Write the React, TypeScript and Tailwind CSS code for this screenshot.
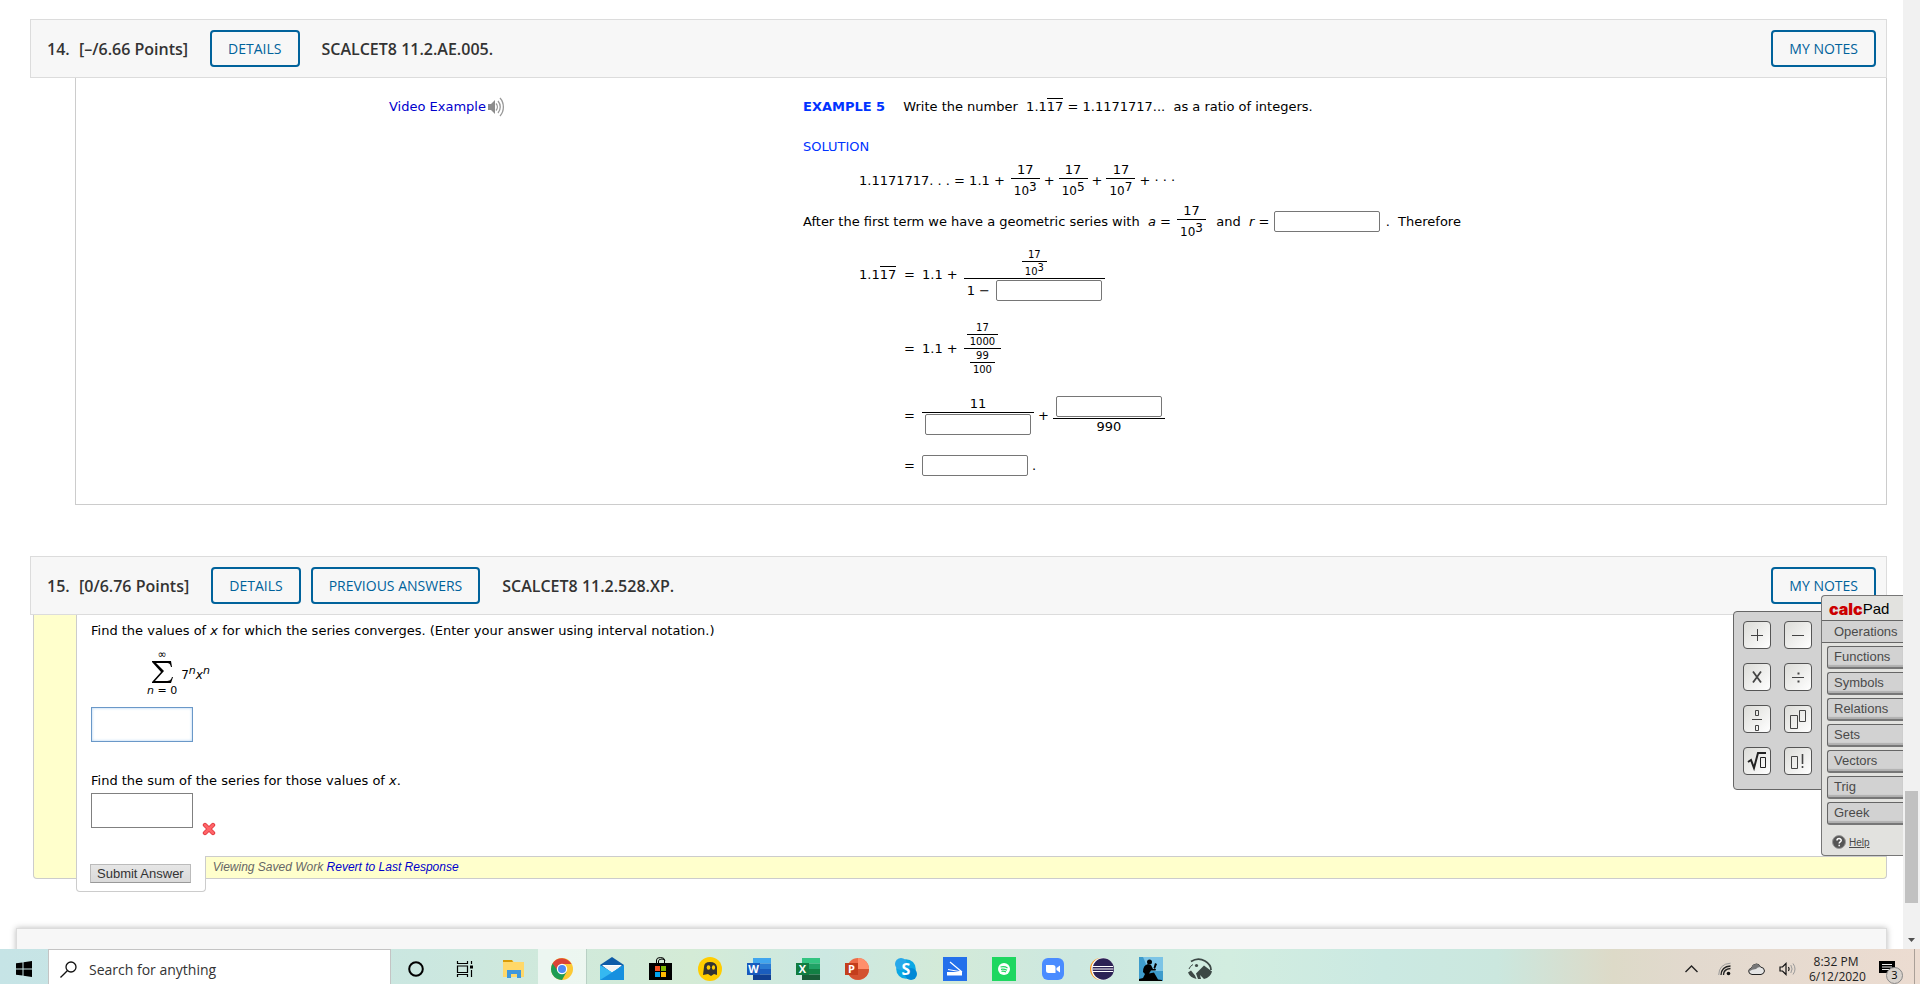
import type { ReactNode } from 'react';
import clsx from 'clsx';

const verdana = "font-['DejaVu_Sans',sans-serif]";
const openSans = "font-['Open_Sans','Noto_Sans',sans-serif]";
const arial = "font-['Liberation_Sans',Arial,sans-serif]";

const calcTabs = ['Functions', 'Symbols', 'Relations', 'Sets', 'Vectors', 'Trig', 'Greek'];

function HeaderButton({ children }: { children: ReactNode }) {
  return (
    <button
      type="button"
      className="h-[37px] rounded border-2 border-[#00629b] bg-[#f7f7f7] px-4 text-sm text-[#00629b]"
    >
      {children}
    </button>
  );
}

interface QuestionHeaderProps {
  number: string;
  points: string;
  code: string;
  actions: string[];
}

function QuestionHeader({ number, points, code, actions }: QuestionHeaderProps) {
  return (
    <header
      className={clsx(
        openSans,
        'flex h-[59px] items-center border border-[#dcdcdc] bg-[#f7f7f7] pr-2.5 pl-4 font-semibold text-[#333]'
      )}
    >
      <span className="w-8">{number}</span>
      <h2>{points}</h2>
      <div className="mx-[22px] flex gap-2.5 font-normal">
        {actions.map((action) => (
          <HeaderButton key={action}>{action}</HeaderButton>
        ))}
      </div>
      <span>{code}</span>
      <div className="ml-auto font-normal">
        <HeaderButton>MY NOTES</HeaderButton>
      </div>
    </header>
  );
}

function Frac({ top, bottom, small }: { top: ReactNode; bottom: ReactNode; small?: boolean }) {
  return (
    <span className={clsx('inline-flex flex-col', small && 'text-[10px]')}>
      <span className={clsx('flex justify-center px-[3px]', small ? 'leading-[13px]' : 'leading-4')}>{top}</span>
      <span
        className={clsx('flex justify-center border-t border-black px-[3px]', small ? 'leading-[13px]' : 'leading-4')}
      >
        {bottom}
      </span>
    </span>
  );
}

function Power({ exp, small }: { exp: string; small?: boolean }) {
  return (
    <span className={clsx('flex', small ? 'pt-[3px]' : 'pt-1 text-xs leading-4')}>
      10<span className="-mt-1">{exp}</span>
    </span>
  );
}

function Blank({ label }: { label: string }) {
  return (
    <input
      type="text"
      aria-label={label}
      className="h-[21px] w-[106px] rounded-[2px] border border-[#767676] bg-white px-1"
    />
  );
}

function Overlined() {
  return (
    <span>
      1.1<span className="border-t border-black">17</span>
    </span>
  );
}

function EquationRow({ left, children }: { left?: ReactNode; children: ReactNode }) {
  return (
    <div className="flex items-center">
      <span className="w-[45px]">{left}</span>
      <span className="w-[18px]">=</span>
      {children}
    </div>
  );
}

function QuestionFourteen() {
  return (
    <section>
      <QuestionHeader
        number="14."
        points="[–/6.66 Points]"
        code="SCALCET8 11.2.AE.005."
        actions={['DETAILS']}
      />
      <div
        className={clsx(
          verdana,
          'ml-[45px] grid grid-cols-[2fr_3fr] border border-t-0 border-[#ccc] px-[15px] pt-[21px] pb-7 text-[13px] leading-4'
        )}
      >
        <div className="flex items-start justify-center">
          <a href="#video" className="text-[#0000cc]">
            Video Example
          </a>
          <SpeakerIcon />
        </div>
        <div>
          <p className="whitespace-pre">
            <b className="mr-[18px] text-[#0033ff]">EXAMPLE 5</b>Write the number{'  '}
            <Overlined /> = 1.1171717...{'  '}as a ratio of integers.
          </p>
          <p className="mt-6 text-[#0033ff]">SOLUTION</p>
          <div className="mt-[7px] ml-14 flex items-center gap-1">
            <span className="mr-0.5">1.1171717. . . = 1.1 +</span>
            <Frac top="17" bottom={<Power exp="3" />} />
            <span>+</span>
            <Frac top="17" bottom={<Power exp="5" />} />
            <span>+</span>
            <Frac top="17" bottom={<Power exp="7" />} />
            <span>+ · · ·</span>
          </div>
          <div className="mt-1 flex items-center whitespace-pre">
            <span className="mr-0.5">
              After the first term we have a geometric series with{'  '}
              <i>a</i> ={' '}
            </span>
            <Frac top="17" bottom={<Power exp="3" />} />
            <span className="ml-0.5">
              {'  '}and{'  '}
              <i>r</i> ={' '}
            </span>
            <Blank label="r" />
            <span className="ml-0.5">
              {' '}
              .{'  '}Therefore
            </span>
          </div>
          <div className="mt-2 ml-14 flex flex-col gap-5">
            <EquationRow left={<Overlined />}>
              <span className="mr-1.5">1.1 +</span>
              <Frac
                top={<Frac small top="17" bottom={<Power small exp="3" />} />}
                bottom={
                  <span className="flex items-center gap-1.5 pt-px">
                    1 − <Blank label="Subtracted from one" />
                  </span>
                }
              />
            </EquationRow>
            <EquationRow>
              <span className="mr-1.5">1.1 +</span>
              <Frac
                top={<Frac small top="17" bottom="1000" />}
                bottom={<Frac small top="99" bottom="100" />}
              />
            </EquationRow>
            <EquationRow>
              <Frac
                top="11"
                bottom={
                  <span className="flex pt-px">
                    <Blank label="Denominator" />
                  </span>
                }
              />
              <span className="mx-1">+</span>
              <Frac
                top={
                  <span className="flex pb-px">
                    <Blank label="Numerator" />
                  </span>
                }
                bottom="990"
              />
            </EquationRow>
            <EquationRow>
              <Blank label="Ratio of integers" />
              <span className="ml-1">.</span>
            </EquationRow>
          </div>
        </div>
      </div>
    </section>
  );
}

function QuestionFifteen() {
  return (
    <section className="mt-[51px]">
      <QuestionHeader
        number="15."
        points="[0/6.76 Points]"
        code="SCALCET8 11.2.528.XP."
        actions={['DETAILS', 'PREVIOUS ANSWERS']}
      />
      <div className="ml-[3px] flex rounded-b border border-t-0 border-[#ccc] bg-[#ffffcc] pl-[42px]">
        <div className="flex-1">
          <div className={clsx(verdana, 'border-l border-[#ccc] bg-white pt-2 pb-7 pl-3.5 text-[13px] leading-4')}>
            <label htmlFor="interval" className="block">
              Find the values of <i>x</i> for which the series converges. (Enter your answer using interval
              notation.)
            </label>
            <div className="mt-[9px] ml-14 flex items-center gap-1">
              <div className="flex flex-col items-center text-[11px] leading-[14px]">
                <span className="h-3">∞</span>
                <svg width="22" height="24" viewBox="0 0 22 24" aria-hidden="true">
                  <path d="M1 1h19l1 6h-1c-1-4-2-4-6-4H5l8 8-9 10h11c4 0 5-1 6-4h1l-2 6H1v-1l9-10L1 2z" />
                </svg>
                <span>
                  <i>n</i> = 0
                </span>
              </div>
              <span className="pt-1 text-xs">
                7<sup className="text-[11px]"><i>n</i></sup>
                <i>x</i>
                <sup className="text-[11px]"><i>n</i></sup>
              </span>
            </div>
            <input
              id="interval"
              type="text"
              className="mt-[9px] block h-[35px] w-[102px] border border-[#6a98c8] bg-white px-1 shadow-[inset_0_0_3px_#a8cdf0]"
            />
            <label htmlFor="sum" className="mt-[31px] block">
              Find the sum of the series for those values of <i>x</i>.
            </label>
            <div className="mt-1 flex items-end gap-[9px]">
              <input id="sum" type="text" className="h-[35px] w-[102px] border border-[#808080] bg-white px-1" />
              <svg width="14" height="14" viewBox="0 0 14 14" className="-mb-2" aria-hidden="true">
                <path d="M3 3l8 8M11 3l-8 8" stroke="#e03a40" strokeWidth="4.4" strokeLinecap="round" />
                <path d="M3 3l8 8M11 3l-8 8" stroke="#ff6468" strokeWidth="2.6" strokeLinecap="round" />
              </svg>
            </div>
          </div>
          <div className={clsx(arial, 'flex items-start')}>
            <div className="-mb-[14px] rounded-b border border-t-0 border-[#ccc] bg-white pt-2 pr-3.5 pb-2 pl-[13px]">
              <button
                type="submit"
                className="block h-[19px] border border-[#bbb] border-b-[#999] bg-linear-to-b from-[#e6e6e6] to-[#dadada] px-1.5 text-[13px] leading-4 text-[#333]"
              >
                Submit Answer
              </button>
            </div>
            <p className="h-[22px] flex-1 border-t border-[#ccc] pl-[7px] text-xs leading-5 text-[#666] italic">
              Viewing Saved Work{' '}
              <a href="#revert" className="text-[#0000cc]">
                Revert to Last Response
              </a>
            </p>
          </div>
        </div>
      </div>
    </section>
  );
}

function SpeakerIcon() {
  return (
    <svg width="18" height="20" viewBox="0 0 18 20" fill="none" className="-mt-0.5 ml-px" aria-hidden="true">
      <path d="M1 7h3l4-4v14l-4-4H1z" fill="#8c8c8c" />
      <path d="M9 6.500c1.800 2 1.800 5 0 7M11 4c3 3.500 3 8.500 0 12M13 1c4.500 5 4.500 13 0 18" stroke="#999" strokeWidth="1.300" />
    </svg>
  );
}

function CalcKey({ label, children }: { label: string; children: ReactNode }) {
  return (
    <button
      type="button"
      aria-label={label}
      className="flex size-7 items-center justify-center rounded border border-[#555] bg-linear-to-br from-[#dcdcd8] to-white"
    >
      <svg width="26" height="26" viewBox="0 0 26 26" fill="none" stroke="#444">
        {children}
      </svg>
    </button>
  );
}

function CalcPad() {
  return (
    <aside className={clsx(arial, 'absolute top-[595px] right-0 flex items-start text-[13px] text-[#4a4a4a]')}>
      <div className="mt-4 grid grid-cols-2 gap-x-[13px] gap-y-3.5 rounded-l border border-[#666] bg-[#d2d2d2] pt-[9px] pr-[9px] pb-3.5 pl-[9px]">
        <CalcKey label="Plus">
          <path d="M7 13.500h12M13.500 7v12" />
        </CalcKey>
        <CalcKey label="Minus">
          <path d="M7 13.500h12" />
        </CalcKey>
        <CalcKey label="Times">
          <path d="M9 7.500l8 11M17 7.500l-8 11" strokeWidth="1.800" />
        </CalcKey>
        <CalcKey label="Divide">
          <path d="M7 13.500h12" />
          <path d="M12.500 9.500h2M12.500 17.500h2" strokeWidth="2" />
        </CalcKey>
        <CalcKey label="Fraction">
          <path d="M8 13.500h10M11.500 4.500h3v5h-3zM11.500 19.500h3v5h-3z" />
        </CalcKey>
        <CalcKey label="Exponent">
          <path d="M5.500 9.500h7v13h-7zM14.500 4.500h6v11h-6z" />
        </CalcKey>
        <CalcKey label="Square root">
          <path d="M4 14l3-2 3 8 4-15h8" strokeWidth="2" stroke="#222" />
          <path d="M16.500 9.500h5v10h-5z" stroke="#222" />
        </CalcKey>
        <CalcKey label="Factorial">
          <path d="M6.500 8.500h6v12h-6z" />
          <path d="M17.500 6v10M17.500 18v2" strokeWidth="1.600" />
        </CalcKey>
      </div>
      <div className="-ml-px w-[82px] overflow-hidden rounded-l border border-r-0 border-[#777] bg-[#e2e2df]">
        <h3 className="flex h-6 items-center pt-0.5 pl-[7px] text-[15px] text-black">
          <span className="font-['Inter','DejaVu_Sans',sans-serif] text-base font-black text-[#cc0000]">calc</span>Pad
        </h3>
        <button
          type="button"
          className="-ml-px block h-[23px] w-[82px] border-y border-[#666] bg-[#d2d2d2] pl-[13px] text-left leading-5"
        >
          Operations
        </button>
        <div className="mt-[3px] ml-[5px] flex flex-col gap-[3px]">
          {calcTabs.map((tab) => (
            <button
              key={tab}
              type="button"
              className="h-[23px] rounded-l-[3px] border border-r-0 border-b-2 border-[#666] border-b-[#777] bg-[#d2d2d2] pl-1.5 text-left leading-5 shadow-[inset_0_-2px_1px_#b0b0b0]"
            >
              {tab}
            </button>
          ))}
        </div>
        <div className="mt-1 flex h-[26px] items-center gap-[3px] pl-2.5 text-[10px]">
          <svg width="14" height="14" viewBox="0 0 14 14" aria-hidden="true">
            <circle cx="7" cy="7" r="6.500" fill="#555" stroke="#999" />
            <path d="M5 5.500C5 3 9.200 3 9.200 5.400 9.200 7 7.200 6.800 7.200 8.500M7.200 9.800v1.500" fill="none" stroke="#fff" strokeWidth="1.500" />
          </svg>
          <a href="#help" className="underline">
            Help
          </a>
        </div>
      </div>
    </aside>
  );
}

function ScrollBar() {
  return (
    <div className="flex w-[17px] flex-col items-center bg-[#f1f1f1]">
      <div className="flex-1" />
      <div className="h-[112px] w-[13px] bg-[#c1c1c1]" />
      <div className="flex h-[46px] items-end pb-[7px]">
        <svg width="7" height="4" viewBox="0 0 7 4" aria-hidden="true">
          <path d="M0 0h7L3.500 4z" fill="#505050" />
        </svg>
      </div>
    </div>
  );
}

interface OfficeProps {
  letter: string;
  tile: string;
  bands: string[];
}

function OfficeIcon({ letter, tile, bands }: OfficeProps) {
  return (
    <>
      {bands.map((color, i) => (
        <rect key={color} x="6" y={1 + i * 5.5} width="18" height="5.500" fill={color} />
      ))}
      <rect x="0" y="6" width="13" height="12" fill={tile} />
      <text x="6.500" y="16" textAnchor="middle" fontSize="11" fontWeight="700" fill="#fff" fontFamily="Open Sans">
        {letter}
      </text>
    </>
  );
}

const apps: { name: string; active?: boolean; icon: ReactNode }[] = [
  { name: 'Cortana', icon: <circle cx="12" cy="12" r="6.800" fill="none" stroke="#000" strokeWidth="2" /> },
  {
    name: 'Task View',
    icon: (
      <g fill="none" stroke="#000" strokeWidth="1.200">
        <path d="M4.500 4v2.500h10V4M4.500 20v-2.500h10V20M4.500 9h10v6.500h-10zM18.500 4v3M18.500 13v7" />
        <path d="M17 8.500h3v3h-3z" fill="#000" stroke="none" />
      </g>
    ),
  },
  {
    name: 'File Explorer',
    icon: (
      <>
        <path d="M1 3h9l2 2h10v15H1z" fill="#ffd869" />
        <path d="M1 3h9l1 2H1z" fill="#d99b06" />
        <path d="M5 13h14v8h-4v-4H9v4H5z" fill="#3f97dc" />
      </>
    ),
  },
  {
    name: 'Chrome',
    active: true,
    icon: (
      <>
        <circle cx="12" cy="12" r="11" fill="#fcc934" />
        <path d="M12 12L2.500 6.500A11 11 0 0 0 12 23l4.500-8z" fill="#1e9c53" />
        <path d="M2.500 6.500A11 11 0 0 1 21.500 7H12L8 14z" fill="#db4437" />
        <circle cx="12" cy="12" r="5.200" fill="#fff" />
        <circle cx="12" cy="12" r="4" fill="#4c8bf5" />
      </>
    ),
  },
  {
    name: 'Mail',
    icon: (
      <>
        <path d="M0 8L12 0l12 8v14H0z" fill="#0f5ba7" />
        <path d="M2 8h20l-10 8z" fill="#fff" />
        <path d="M0 8l12 7 12-7v15H0z" fill="#35b8f1" />
        <path d="M0 23L24 8v15z" fill="#1690df" />
        <path d="M3 9h18l-9 6z" fill="#f3f3f3" />
      </>
    ),
  },
  {
    name: 'Microsoft Store',
    icon: (
      <>
        <path d="M0 6h23v17H0z" />
        <path d="M7.500 6V3q0-2.500 4-2.500t4 2.500v3M9.500 6V4q0-2 3.500-2 3 0 3 2" fill="none" stroke="#000" />
        <path d="M6 9h5v5H6z" fill="#f25022" />
        <path d="M12 9h5v5h-5z" fill="#7fba00" />
        <path d="M6 15h5v5H6z" fill="#00a4ef" />
        <path d="M12 15h5v5h-5z" fill="#ffb900" />
      </>
    ),
  },
  {
    name: 'CyberGhost',
    icon: (
      <>
        <circle cx="12" cy="12" r="12" fill="#ffcc00" />
        <path d="M6 10q0-5 6-5t7 5v8l-3-1-3 2-3-2-5 1z" fill="#333" />
        <ellipse cx="10.500" cy="10.500" rx="1.800" ry="2.200" fill="#ffcc00" />
        <ellipse cx="15.500" cy="10.500" rx="1.600" ry="2.200" fill="#ffcc00" />
      </>
    ),
  },
  { name: 'Word', icon: <OfficeIcon letter="W" tile="#185abd" bands={['#41a5ee', '#2b7cd3', '#1a5dbe', '#103f91']} /> },
  { name: 'Excel', icon: <OfficeIcon letter="X" tile="#107c41" bands={['#33c481', '#21a366', '#128044', '#185c37']} /> },
  {
    name: 'PowerPoint',
    icon: (
      <>
        <circle cx="13" cy="12" r="11" fill="#ed6c47" />
        <path d="M13 12V1a11 11 0 0 1 11 11z" fill="#ff8f6b" />
        <path d="M13 12h11a11 11 0 0 1-20 6z" fill="#d35230" />
        <rect x="0" y="6" width="13" height="12" fill="#c43e1c" />
        <text x="6.500" y="16" textAnchor="middle" fontSize="11" fontWeight="700" fill="#fff" fontFamily="Open Sans">
          P
        </text>
      </>
    ),
  },
  {
    name: 'Skype',
    icon: (
      <>
        <circle cx="12" cy="12" r="9.800" fill="#0aa7e4" />
        <circle cx="7" cy="7" r="6" fill="#28a8ea" />
        <circle cx="17" cy="17" r="6" fill="#0089d6" />
        <text x="12" y="17.500" textAnchor="middle" fontSize="16" fontWeight="700" fill="#fff" fontFamily="Open Sans">
          S
        </text>
      </>
    ),
  },
  {
    name: 'Scan',
    icon: (
      <>
        <path d="M0 0h24v24H0z" fill="#2470eb" />
        <path d="M4 15h15v3.500H4z" fill="#fff" />
        <path d="M7 5l12 10M5 12.500l14 2.500" stroke="#fff" strokeWidth="1.200" />
      </>
    ),
  },
  {
    name: 'Spotify',
    icon: (
      <>
        <path d="M0 0h24v24H0z" fill="#1ed760" />
        <circle cx="12" cy="12" r="6" fill="#fff" />
        <path d="M8.500 10q4-1 7 1M9 12.300q3-.7 6 1M9.500 14.300q2.500-.5 4.500.7" fill="none" stroke="#1ed760" strokeWidth="1.200" />
      </>
    ),
  },
  {
    name: 'Zoom',
    icon: (
      <>
        <rect x="1" y="1" width="22" height="22" rx="6" fill="#4a8cff" />
        <path d="M5 8h7q2.500 0 2.500 2.500V16H7.500Q5 16 5 13.500zM15.500 11L19 8.500v7L15.500 13z" fill="#fff" />
      </>
    ),
  },
  {
    name: 'Eclipse',
    icon: (
      <>
        <circle cx="11" cy="12" r="11" fill="#f7941e" />
        <circle cx="12.500" cy="12" r="11.200" fill="#fff" />
        <circle cx="13.300" cy="12" r="10.700" fill="#2c2255" />
        <path d="M3 9.500h20M2.500 12h21M3 14.500h20" stroke="#fff" strokeWidth="1.200" />
      </>
    ),
  },
  {
    name: 'Kindle',
    icon: (
      <>
        <path d="M0 0h24v24H0z" fill="#3e9ccc" />
        <path d="M4 0h20v14H10z" fill="#7cc4e6" />
        <circle cx="10.500" cy="5" r="2.500" />
        <path d="M0 22l4-1 2-4-2-2q0-7 5-8l3 1 2 4 3 0-.5 1.500H12l-2 3 5-1 4 7 4 .5v1H0z" />
        <path d="M16 6l2 1-2 5-1.500-1z" />
      </>
    ),
  },
  {
    name: 'Photo Gallery',
    icon: (
      <>
        <path d="M3 4.500q7-4.500 14-.5 6 3.500 6 9" fill="none" stroke="#3c4845" strokeWidth="1.800" />
        <path d="M0 15.500l3-2 4 5 1.500 3.500Q2 20.500 0 15.500zM8 16.500l8-8 8 6q-1.500 6-8 7.500l-4-4 1 4h-3z" fill="#3c4845" />
        <circle cx="8.500" cy="8.500" r="1.600" fill="#3c4845" />
        <path d="M1 12q1-3 4-4.500" fill="none" stroke="#3c4845" />
      </>
    ),
  },
];

function Taskbar() {
  return (
    <nav
      className={clsx(
        openSans,
        'h-[35px] shrink-0 overflow-hidden bg-[linear-gradient(90deg,#c6e4e6,#cbe7e0_22%,#d4ebd6_36%,#cce8e2_43%,#d3ead8_49%,#cde8e0_56%,#d2ede0_64%,#cbe9e2_72%,#cbe7de_78%,#dddac8_84%,#e2d9ce_88%,#ecdcd1)]'
      )}
    >
      <div className="flex h-10 items-center">
        <button type="button" aria-label="Start" className="flex h-full w-12 items-center justify-center">
          <svg width="16" height="16" viewBox="0 0 16 16">
            <path d="M0 2.300l6.500-.9v6.100H0zM7.500 1.200L16 0v7.500H7.500zM0 8.500h6.500v6.100L0 13.700zM7.500 8.500H16V16l-8.500-1.200z" />
          </svg>
        </button>
        <label className="flex h-full w-[343px] items-center gap-3 border border-[#c4c4c4] bg-white pl-[11px]">
          <svg width="17" height="17" viewBox="0 0 17 17" fill="none" stroke="#111" strokeWidth="1.300">
            <circle cx="11" cy="6" r="5" />
            <path d="M7.300 9.700L.5 16.500" />
          </svg>
          <input
            type="text"
            aria-label="Search"
            placeholder="Search for anything"
            className="w-64 text-[14px] outline-none placeholder:text-[#333]"
          />
        </label>
        {apps.map((app) => (
          <button
            key={app.name}
            type="button"
            aria-label={app.name}
            className={clsx(
              'flex h-full w-[49px] items-center justify-center',
              app.active && 'border-r border-[#b8d0c4] bg-white/60'
            )}
          >
            <svg width="24" height="24" viewBox="0 0 24 24">
              {app.icon}
            </svg>
          </button>
        ))}
        <div className="ml-auto flex h-full items-center">
          <svg width="13" height="8" viewBox="0 0 13 8" fill="none" stroke="#222" strokeWidth="1.400">
            <path d="M.5 7l6-6 6 6" />
          </svg>
          <svg width="14" height="14" viewBox="0 0 14 14" fill="none" className="ml-5">
            <circle cx="10.500" cy="11.500" r="1.800" fill="#111" />
            <path d="M5.500 13q0-6 7-6.500M3 13Q3.500 4.500 12.500 4" stroke="#222" strokeWidth="1.300" />
            <path d="M.7 13Q1 2 12.500 1.200" stroke="#999" />
          </svg>
          <svg width="17" height="12" viewBox="0 0 17 12" className="ml-4">
            <path d="M4 11.500Q.5 11 .7 8 1 5.500 3.500 5 4.500 1 8.500 1q3 0 4 3 4 .5 4 4-.5 3-3.500 3.500z" fill="#e4e4e4" stroke="#222" />
            <path d="M1 8.500Q1 5.500 3.500 5 4.500 1 8.500 1q3 0 4 3-3 0-4.500 2-4 0-7 2.500z" fill="#777" />
          </svg>
          <svg width="18" height="14" viewBox="0 0 18 14" fill="none" className="ml-3.5">
            <path d="M1 5h2.500L7 1.500v11L3.500 9H1zM9.500 5q1.300 2 0 4" stroke="#111" strokeWidth="1.200" />
            <path d="M11.800 3q2.600 4 0 8M14 1.500q4 5.500 0 11" stroke="#999" />
          </svg>
          <div className="ml-3 w-[54px] text-center text-xs leading-[15px] whitespace-nowrap text-[#222]">
            <div>8:32 PM</div>
            <div>6/12/2020</div>
          </div>
          <button type="button" aria-label="3 notifications" className="relative ml-4 h-full w-[27px]">
            <svg width="16" height="16" viewBox="0 0 16 16" className="absolute top-3 left-0">
              <path d="M0 0h16v12h-4v4l-4-4H0z" />
              <path d="M3 3.500h10M3 6h10M3 8.500h7" stroke="#eee" />
            </svg>
            <span className="absolute top-[18px] left-[7px] flex size-[17px] items-center justify-center rounded-full border border-[#888] bg-[#d8d2cc] text-[11px]">
              3
            </span>
          </button>
          <div className="ml-2 h-full w-1.5 border-l border-[#aaa098]" />
        </div>
      </div>
    </nav>
  );
}

export default function App() {
  return (
    <div className="flex h-screen flex-col overflow-hidden bg-white text-black">
      <div className="flex min-h-0 flex-1">
        <main className="relative min-w-0 flex-1 overflow-hidden pt-[19px]">
          <div className="pr-4 pl-[30px]">
            <QuestionFourteen />
            <QuestionFifteen />
          </div>
          <div className="mt-[49px] mr-4 ml-4 h-[60px] border border-[#dcdcdc] bg-[#f7f7f7] shadow-[0_0_6px_#bbb]" />
          <CalcPad />
        </main>
        <ScrollBar />
      </div>
      <Taskbar />
    </div>
  );
}
